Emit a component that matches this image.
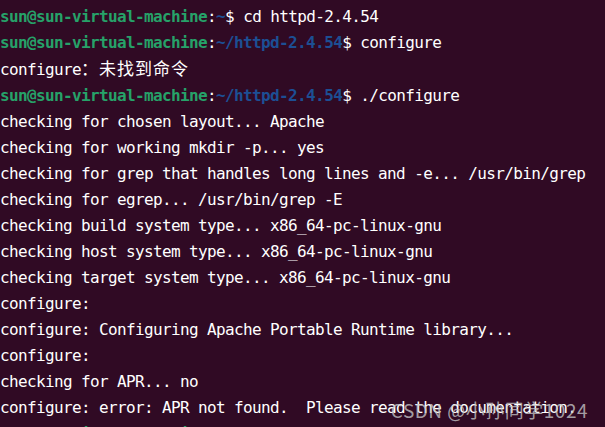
const G = "text-[#26a269] font-bold";
const B = "text-[#1c4f94] font-bold";

function Prompt({ dir, cmd }: { dir: string; cmd: string }) {
  return (
    <div>
      <span className={G}>sun@sun-virtual-machine</span>
      <span>:</span>
      <span className={B}>{dir}</span>
      <span>$ {cmd}</span>
    </div>
  );
}

const output = [
  "checking for chosen layout... Apache",
  "checking for working mkdir -p... yes",
  "checking for grep that handles long lines and -e... /usr/bin/grep",
  "checking for egrep... /usr/bin/grep -E",
  "checking build system type... x86_64-pc-linux-gnu",
  "checking host system type... x86_64-pc-linux-gnu",
  "checking target system type... x86_64-pc-linux-gnu",
  "configure:",
  "configure: Configuring Apache Portable Runtime library...",
  "configure:",
  "checking for APR... no",
  "configure: error: APR not found.  Please read the documentation.",
];

export default function App() {
  return (
    <div className="relative w-[605px] h-[427px] overflow-hidden bg-[#300a24]">
      <div className="pt-[3.5px] font-['DejaVu_Sans_Mono','Noto_Sans_CJK_SC',monospace] text-[16px] leading-[26px] tracking-[-0.63px] text-white whitespace-pre">
        <Prompt dir="~" cmd="cd httpd-2.4.54" />
        <Prompt dir="~/httpd-2.4.54" cmd="configure" />
        <div>
          configure
          <span className="text-[17px] tracking-[1px]">：未找到命令</span>
        </div>
        <Prompt dir="~/httpd-2.4.54" cmd="./configure" />
        {output.map((line, i) => (
          <div key={i}>{line}</div>
        ))}
        <Prompt dir="~/httpd-2.4.54" cmd="" />
      </div>
      <div className="absolute right-[17px] bottom-[4px] font-['Noto_Sans_CJK_SC',sans-serif] text-[19px] tracking-[0.5px] leading-[26px] text-[#c4c4c4]/80 whitespace-pre">
        CSDN @小孙同学1024
      </div>
    </div>
  );
}
